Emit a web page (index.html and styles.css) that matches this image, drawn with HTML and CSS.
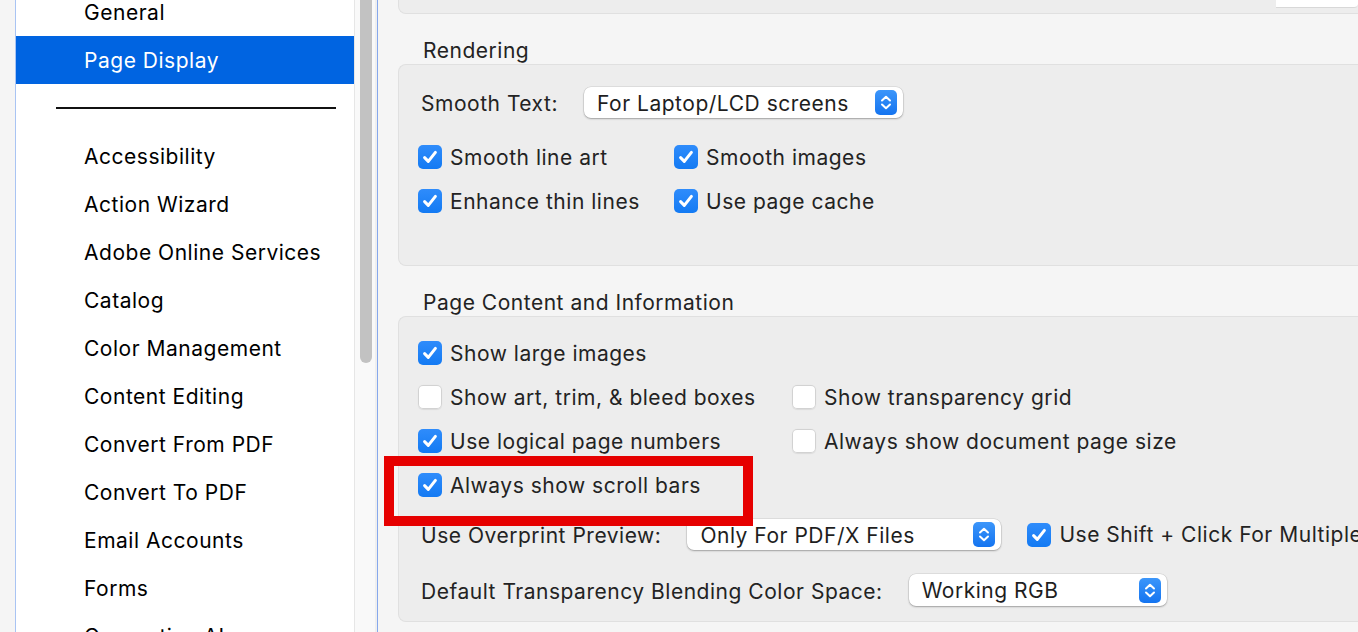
FILE: index.html
```html
<!DOCTYPE html>
<html lang="en">
<head>
<meta charset="utf-8">
<title>Preferences - Page Display</title>
<link rel="stylesheet" href="styles.css">
</head>
<body>
<div class="window">
  <div class="gutter"></div>
  <nav class="sidebar">
    <ul class="cats">
      <li class="cat">General</li>
      <li class="cat selected">Page Display</li>
      <li class="cat sep"><span class="rule"></span></li>
      <li class="cat">Accessibility</li>
      <li class="cat">Action Wizard</li>
      <li class="cat">Adobe Online Services</li>
      <li class="cat">Catalog</li>
      <li class="cat">Color Management</li>
      <li class="cat">Content Editing</li>
      <li class="cat">Convert From PDF</li>
      <li class="cat">Convert To PDF</li>
      <li class="cat">Email Accounts</li>
      <li class="cat">Forms</li>
      <li class="cat">Generative AI</li>
    </ul>
  </nav>
  <div class="scrollbar"><div class="thumb"></div></div>
  <main class="panel">
    <div class="group group-top">
      <span class="radio"></span>
      <span class="top-select"></span>
    </div>

    <h3 class="group-title">Rendering</h3>
    <section class="group group-render">
      <div class="form-row">
        <span class="field-label">Smooth Text:</span>
        <div class="select select-smooth">
          <span class="select-value">For Laptop/LCD screens</span>
          <span class="stepper"><svg viewBox="0 0 22 25" width="22" height="25"><path d="M7 10.5 L11 6.8 L15 10.5 M7 14.5 L11 18.2 L15 14.5" fill="none" stroke="#fff" stroke-width="2" stroke-linecap="round" stroke-linejoin="round"/></svg></span>
        </div>
      </div>
      <div class="check-grid grid-render">
        <label class="check"><span class="box on"><svg viewBox="0 0 24 24" width="24" height="24"><path d="M6.6 12.6 L10.3 16.4 L17.4 7.4" fill="none" stroke="#fff" stroke-width="3" stroke-linecap="round" stroke-linejoin="round"/></svg></span>Smooth line art</label>
        <label class="check"><span class="box on"><svg viewBox="0 0 24 24" width="24" height="24"><path d="M6.6 12.6 L10.3 16.4 L17.4 7.4" fill="none" stroke="#fff" stroke-width="3" stroke-linecap="round" stroke-linejoin="round"/></svg></span>Smooth images</label>
        <label class="check"><span class="box on"><svg viewBox="0 0 24 24" width="24" height="24"><path d="M6.6 12.6 L10.3 16.4 L17.4 7.4" fill="none" stroke="#fff" stroke-width="3" stroke-linecap="round" stroke-linejoin="round"/></svg></span>Enhance thin lines</label>
        <label class="check"><span class="box on"><svg viewBox="0 0 24 24" width="24" height="24"><path d="M6.6 12.6 L10.3 16.4 L17.4 7.4" fill="none" stroke="#fff" stroke-width="3" stroke-linecap="round" stroke-linejoin="round"/></svg></span>Use page cache</label>
      </div>
    </section>

    <h3 class="group-title">Page Content and Information</h3>
    <section class="group group-content">
      <div class="check-grid grid-content">
        <label class="check"><span class="box on"><svg viewBox="0 0 24 24" width="24" height="24"><path d="M6.6 12.6 L10.3 16.4 L17.4 7.4" fill="none" stroke="#fff" stroke-width="3" stroke-linecap="round" stroke-linejoin="round"/></svg></span>Show large images</label>
        <span></span>
        <label class="check"><span class="box"></span>Show art, trim, &amp; bleed boxes</label>
        <label class="check"><span class="box"></span>Show transparency grid</label>
        <label class="check"><span class="box on"><svg viewBox="0 0 24 24" width="24" height="24"><path d="M6.6 12.6 L10.3 16.4 L17.4 7.4" fill="none" stroke="#fff" stroke-width="3" stroke-linecap="round" stroke-linejoin="round"/></svg></span>Use logical page numbers</label>
        <label class="check"><span class="box"></span>Always show document page size</label>
        <label class="check highlighted"><span class="box on"><svg viewBox="0 0 24 24" width="24" height="24"><path d="M6.6 12.6 L10.3 16.4 L17.4 7.4" fill="none" stroke="#fff" stroke-width="3" stroke-linecap="round" stroke-linejoin="round"/></svg></span>Always show scroll bars<span class="red-mark"></span></label>
      </div>
      <div class="form-row row-overprint">
        <span class="field-label">Use Overprint Preview:</span>
        <div class="select select-overprint">
          <span class="select-value">Only For PDF/X Files</span>
          <span class="stepper"><svg viewBox="0 0 22 25" width="22" height="25"><path d="M7 10.5 L11 6.8 L15 10.5 M7 14.5 L11 18.2 L15 14.5" fill="none" stroke="#fff" stroke-width="2" stroke-linecap="round" stroke-linejoin="round"/></svg></span>
        </div>
        <label class="check"><span class="box on"><svg viewBox="0 0 24 24" width="24" height="24"><path d="M6.6 12.6 L10.3 16.4 L17.4 7.4" fill="none" stroke="#fff" stroke-width="3" stroke-linecap="round" stroke-linejoin="round"/></svg></span>Use Shift + Click For Multiple Selection</label>
      </div>
      <div class="form-row row-blend">
        <span class="field-label">Default Transparency Blending Color Space:</span>
        <div class="select select-blend">
          <span class="select-value">Working RGB</span>
          <span class="stepper"><svg viewBox="0 0 22 25" width="22" height="25"><path d="M7 10.5 L11 6.8 L15 10.5 M7 14.5 L11 18.2 L15 14.5" fill="none" stroke="#fff" stroke-width="2" stroke-linecap="round" stroke-linejoin="round"/></svg></span>
        </div>
      </div>
    </section>
  </main>
</div>
</body>
</html>
```
FILE: styles.css
```css
* { box-sizing: border-box; }
html, body { margin: 0; padding: 0; }
body {
  font-family: Inter, "Noto Sans", "Liberation Sans", sans-serif;
  font-size: 21px;
  letter-spacing: 0.52px;
  color: #232323;
  background: #f5f5f5;
  overflow: hidden;
}
.window {
  display: flex;
  width: 1358px;
  height: 632px;
  overflow: hidden;
  background: #f5f5f5;
}
.gutter {
  width: 15px;
  flex: none;
  background: #f5f5f5;
}
.sidebar {
  width: 339px;
  flex: none;
  background: #fff;
  border-left: 1px solid #a9c4f3;
  overflow: hidden;
}
.cats {
  list-style: none;
  margin: -12px 0 0 0;
  padding: 0;
}
.cat {
  height: 48px;
  line-height: 50px;
  padding-left: 68px;
  color: #000;
  white-space: nowrap;
}
.cat.selected {
  background: #0064e1;
  color: #fff;
}
.cat.sep {
  display: flex;
  align-items: center;
  padding-left: 40px;
  padding-right: 18px;
}
.rule {
  display: block;
  width: 100%;
  height: 2px;
  background: #111;
}
.scrollbar {
  width: 23px;
  flex: none;
  background: #f9f9f9;
  border-left: 1px solid #e6e6e6;
  border-right: 2px solid #efefef;
}
.thumb {
  width: 12px;
  height: 363px;
  margin-left: 5px;
  background: #c2c2c2;
  border-radius: 0 0 6px 6px;
}
.panel {
  flex: 1;
  min-width: 0;
  border-left: 1px solid #86a8ec;
  padding-left: 20px;
  overflow: hidden;
  background: #f5f5f5;
}
.group {
  background: #ededed;
  border: 1px solid #e0e0e0;
  border-right: none;
  border-radius: 8px 0 0 8px;
  margin-right: -20px;
}
.group-top {
  height: 41px;
  margin-top: -27px;
  display: flex;
  align-items: flex-start;
  padding-left: 21px;
  padding-top: 8px;
}
.radio {
  width: 18px;
  height: 18px;
  border-radius: 50%;
  background: #1a7ef5;
}
.top-select {
  margin-left: auto;
  margin-right: 20px;
  margin-top: 6px;
  width: 82px;
  height: 20px;
  background: #fff;
  border-bottom: 1px solid #d8d8d8;
  border-radius: 0 0 4px 0;
}
.group-title {
  margin: 0;
  height: 50px;
  padding-top: 25px;
  padding-left: 25px;
  line-height: 24px;
  font-size: 21px;
  font-weight: 400;
  color: #232323;
}
.group-render {
  height: 202px;
  padding: 22px 0 0 19px;
}
.form-row {
  display: flex;
  align-items: center;
  gap: 26px;
  padding-left: 3px;
  white-space: nowrap;
}
.field-label { padding-top: 2px; }
.select {
  display: flex;
  align-items: center;
  justify-content: space-between;
  height: 31px;
  background: #fff;
  border-radius: 7px;
  box-shadow: 0 0 0 0.5px rgba(0,0,0,0.12), 0 1px 2px rgba(0,0,0,0.28);
  padding: 0 6px 0 13px;
  flex: none;
}
.select-smooth { width: 319px; }
.select-overprint { width: 314px; }
.select-blend { width: 258px; height: 32px; }
.select-value { color: #1e1e1e; padding-top: 1px; }
.stepper {
  display: block;
  width: 22px;
  height: 25px;
  border-radius: 5px;
  background: linear-gradient(#3c96fa, #1474f0);
}
.stepper svg { display: block; }
.check-grid {
  display: grid;
  grid-auto-rows: 44px;
  align-items: center;
  white-space: nowrap;
}
.grid-render {
  margin-top: 17px;
  grid-template-columns: 256px auto;
}
.grid-content {
  grid-template-columns: 374px auto;
}
.check {
  display: flex;
  align-items: center;
  gap: 8px;
  color: #232323;
}
.box {
  flex: none;
  width: 24px;
  height: 24px;
  border-radius: 5px;
  background: #fff;
  box-shadow: inset 0 0 0 1px #d2d2d2, 0 0.5px 1px rgba(0,0,0,0.08);
}
.box.on {
  background: linear-gradient(#2f8cfb, #137af3);
  box-shadow: none;
}
.box svg { display: block; }
.group-content {
  height: 306px;
  padding: 14px 0 0 19px;
}
.highlighted { position: relative; }
.red-mark {
  position: absolute;
  left: -34px;
  top: -17px;
  width: 369px;
  height: 70px;
  border: 10px solid #e60000;
  pointer-events: none;
}
.row-overprint { margin-top: 12px; }
.row-blend { margin-top: 24px; }
```
